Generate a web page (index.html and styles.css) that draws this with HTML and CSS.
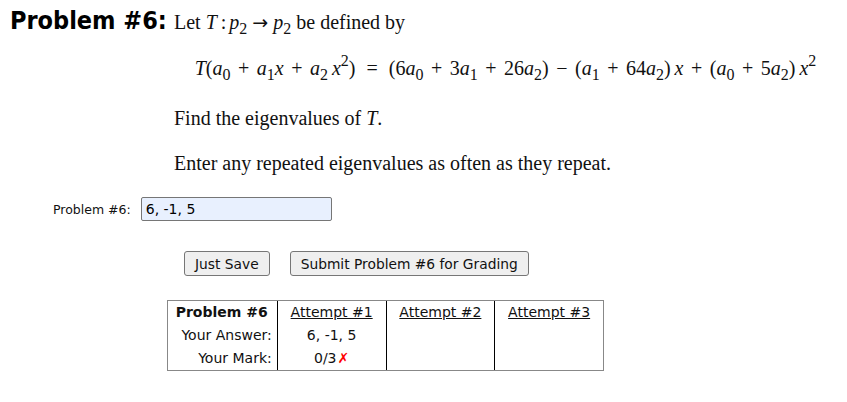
FILE: index.html
```html
<!DOCTYPE html>
<html lang="en">

<head>
    <meta charset="UTF-8" />
    <title>Problem 6</title>
    <link rel="stylesheet" href="styles.css">
</head>

<body>
    <!-- 题目 -->
    <div class="problem">
        <h2 class="problem-title">Problem #6:</h2>
        <div class="problem-text">
            <p class="line-first">Let <i>T</i><span class="colon">:</span><i>p</i><sub>2</sub><span class="arrow">&rarr;</span><i>p</i><sub>2</sub> be defined by</p>
            <p class="eq">
                <i>T</i>(<i>a</i><sub>0</sub><span class="op">+</span><i>a</i><sub>1</sub><i>x</i><span class="op">+</span><i>a</i><sub>2</sub>&#8201;<i>x</i><sup>2</sup>)<span class="eq-sign">=</span>(6<i>a</i><sub>0</sub><span class="op">+</span>3<i>a</i><sub>1</sub><span class="op">+</span>26<i>a</i><sub>2</sub>)<span class="op">&minus;</span>(<i>a</i><sub>1</sub><span class="op">+</span>64<i>a</i><sub>2</sub>)&#8201;<i>x</i><span class="op">+</span>(<i>a</i><sub>0</sub><span class="op">+</span>5<i>a</i><sub>2</sub>)&#8201;<i>x</i><sup>2</sup>
            </p>
            <p class="line-find">Find the eigenvalues of <i>T</i>.</p>
            <p class="line-enter">Enter any repeated eigenvalues as often as they repeat.</p>
        </div>
    </div>

    <!-- 答案输入 -->
    <div class="answer-row">
        <label for="ans">Problem #6:</label>
        <input id="ans" type="text" value="6, -1, 5" />
    </div>

    <div class="buttons">
        <button>Just Save</button>
        <button>Submit Problem #6 for Grading</button>
    </div>

    <!-- 提交记录 -->
    <table class="attempts">
        <tr>
            <th class="head">Problem #6</th>
            <td><a href="#">Attempt #1</a></td>
            <td><a href="#">Attempt #2</a></td>
            <td><a href="#">Attempt #3</a></td>
        </tr>
        <tr>
            <th>Your Answer:</th>
            <td>6, -1, 5</td>
            <td></td>
            <td></td>
        </tr>
        <tr>
            <th>Your Mark:</th>
            <td>0/3<span class="wrong">&#10007;</span></td>
            <td></td>
            <td></td>
        </tr>
    </table>
</body>

</html>
```

FILE: styles.css
```css
* {
    margin: 0;
    padding: 0;
    box-sizing: border-box;
}

body {
    background: #fff;
    color: #000;
    font-family: "DejaVu Sans", Verdana, sans-serif;
    font-size: 13px;
}

.problem {
    display: flex;
    align-items: baseline;
    padding: 7px 10px 0 10px;
}

.problem-title {
    flex: 0 0 164px;
    font-family: "DejaVu Sans Condensed", "DejaVu Sans", sans-serif;
    font-stretch: condensed;
    font-weight: bold;
    font-size: 25px;
    line-height: 28px;
    color: #000;
}

.problem-text {
    flex: 1;
    font-family: "Liberation Serif", "Times New Roman", serif;
    font-size: 20px;
    line-height: 22px;
    color: #111;
}

.problem-text sub,
.problem-text sup {
    font-size: 0.8em;
    line-height: 0;
}

.problem-text sub {
    vertical-align: -0.3em;
}

.problem-text sup {
    vertical-align: 0.55em;
}

.colon {
    margin: 0 3px 0 4px;
}

.arrow {
    font-family: "DejaVu Sans", sans-serif;
    font-size: 19px;
    margin: 0 5px;
}

.eq {
    margin-top: 24px;
    text-align: center;
    white-space: nowrap;
}

.op {
    margin: 0 7.5px;
}

.eq-sign {
    margin: 0 11px;
}

.line-find {
    margin-top: 28px;
}

.line-enter {
    margin-top: 23px;
}

.answer-row {
    display: flex;
    align-items: center;
    gap: 10px;
    margin-top: 23px;
    padding-left: 53px;
    color: #111;
}

.answer-row label {
    font-size: 12.5px;
}

.answer-row input {
    width: 191px;
    height: 24px;
    padding: 0 4px;
    border: 1px solid #767676;
    border-radius: 2px;
    background: #e8f0fe;
    font-family: "DejaVu Sans", sans-serif;
    font-size: 14px;
    color: #000;
    outline: none;
}

.buttons {
    display: flex;
    gap: 20px;
    margin-top: 30px;
    padding-left: 184px;
}

.buttons button {
    height: 25px;
    padding: 0 10px;
    border: 1px solid #767676;
    border-radius: 3px;
    background: #efefef;
    font-family: "DejaVu Sans", sans-serif;
    font-size: 13.8px;
    color: #111;
    cursor: pointer;
}

.buttons button:hover {
    background: #e5e5e5;
}

.attempts {
    margin: 24px 0 0 167px;
    width: 437px;
    table-layout: fixed;
    border-collapse: separate;
    border-spacing: 0;
    border: 1px solid #888;
    font-size: 14px;
    color: #111;
}

.attempts th,
.attempts td {
    height: 23px;
    padding: 2px 6px;
    line-height: 17px;
    font-weight: normal;
}

.attempts th {
    text-align: right;
    padding-right: 5px;
}

.attempts th.head {
    font-weight: bold;
    padding-right: 9px;
}

.attempts td {
    text-align: center;
    border-left: 1px solid #000;
}

.attempts a {
    color: #111;
}

.wrong {
    color: #f00;
    font-weight: bold;
    margin-left: 1px;
}
```
